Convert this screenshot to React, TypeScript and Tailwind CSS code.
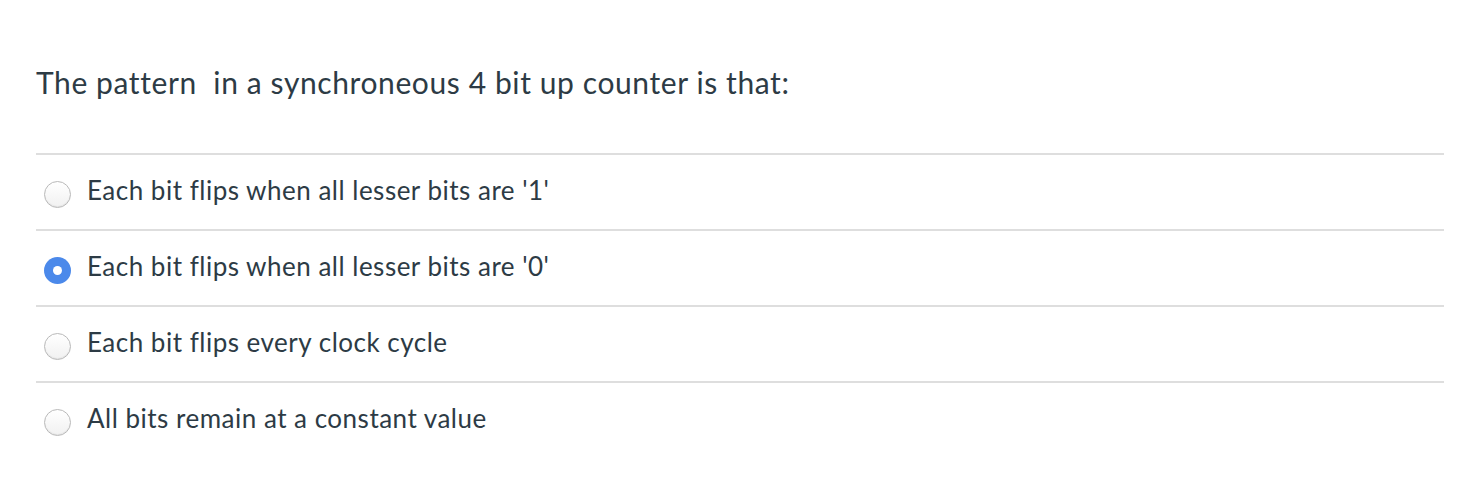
import React from 'react';

const options = [
  "Each bit flips when all lesser bits are '1'",
  "Each bit flips when all lesser bits are '0'",
  'Each bit flips every clock cycle',
  'All bits remain at a constant value',
];

function Radio({ checked }: { checked: boolean }) {
  if (checked) {
    return (
      <span className="flex h-[27px] w-[27px] shrink-0 items-center justify-center rounded-full bg-[#4b89ea]">
        <span className="h-[9px] w-[9px] rounded-full bg-white" />
      </span>
    );
  }
  return (
    <span className="h-[27px] w-[27px] shrink-0 rounded-full border border-[#b9b9b9] bg-gradient-to-b from-white to-[#f1f1f1] shadow-[inset_0_-1px_1px_rgba(0,0,0,0.06)]" />
  );
}

export default function App() {
  const selected = 1;
  return (
    <div className="min-h-[498px] bg-white pl-[36px] pr-[40px] pt-[62px] text-[#2d3b45]" style={{ fontFamily: 'Lato, "Open Sans", sans-serif' }}>
      <h1 className="whitespace-pre text-[30px] leading-[40px] font-normal tracking-[0.6px]">
        The pattern  in a synchroneous 4 bit up counter is that:
      </h1>
      <div className="mt-[51px]">
        {options.map((opt, i) => (
          <div
            key={opt}
            className="flex h-[76px] items-center gap-[16px] border-t-2 border-[#dedede] pl-[8px]"
          >
            <div className="mt-[4px] flex">
              <Radio checked={i === selected} />
            </div>
            <span className="-mt-[4px] text-[26px] leading-[30px] tracking-[0.5px]">{opt}</span>
          </div>
        ))}
      </div>
    </div>
  );
}
